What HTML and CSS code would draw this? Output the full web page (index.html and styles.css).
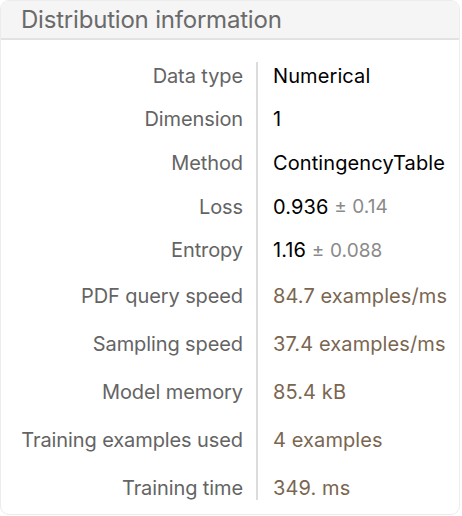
FILE: index.html
```html
<!DOCTYPE html>
<html>
<head>
<meta charset="utf-8">
<link rel="stylesheet" href="styles.css">
</head>
<body>
<div class="panel">
  <div class="header">Distribution information</div>
  <div class="grid">
    <div class="lbl">Data type</div><div class="val">Numerical</div>
    <div class="lbl">Dimension</div><div class="val">1</div>
    <div class="lbl">Method</div><div class="val">ContingencyTable</div>
    <div class="lbl">Loss</div><div class="val">0.936 <span class="pm">± 0.14</span></div>
    <div class="lbl">Entropy</div><div class="val">1.16 <span class="pm">± 0.088</span></div>
    <div class="lbl">PDF query speed</div><div class="val q">84.7 examples/ms</div>
    <div class="lbl">Sampling speed</div><div class="val q">37.4 examples/ms</div>
    <div class="lbl">Model memory</div><div class="val q">85.4 kB</div>
    <div class="lbl">Training examples used</div><div class="val q">4 examples</div>
    <div class="lbl">Training time</div><div class="val q">349. ms</div>
  </div>
</div>
</body>
</html>
```
FILE: styles.css
```css
html, body { margin: 0; padding: 0; background: #fff; }
body { font-family: Inter, "Noto Sans", sans-serif; }
.panel {
  width: 458px;
  height: 513px;
  border: 1px solid #ececec;
  border-radius: 9px;
  overflow: hidden;
  box-sizing: content-box;
}
.header {
  height: 37px;
  background: #f5f5f5;
  border-bottom: 2px solid #e2e2e2;
  color: #6a6a6a;
  font-size: 24px;
  line-height: 37px;
  padding-left: 20px;
  letter-spacing: -0.2px;
}
.grid {
  display: grid;
  grid-template-columns: 257px 1fr;
  grid-template-rows: 35px 44px 44px 43px 44px 47px 49px 48px 47px 37px;
  margin-top: 22px;
  font-size: 20px;
}
.grid > :nth-child(-n+2) { padding-bottom: 7px; }
.grid > :nth-last-child(-n+2) { padding-top: 12px; }
.lbl {
  color: #646464;
  text-align: right;
  padding-right: 13px;
  border-right: 2px solid #dcdcdc;
  display: flex;
  align-items: center;
  justify-content: flex-end;
  white-space: nowrap;
  letter-spacing: -0.1px;
}
.val {
  color: #000;
  padding-left: 15px;
  display: flex;
  align-items: center;
  white-space: pre;
  letter-spacing: 0.1px;
}
.val.q { color: #7a6650; }
.pm { color: #8a8a8a; font-size: 19px; }
```
